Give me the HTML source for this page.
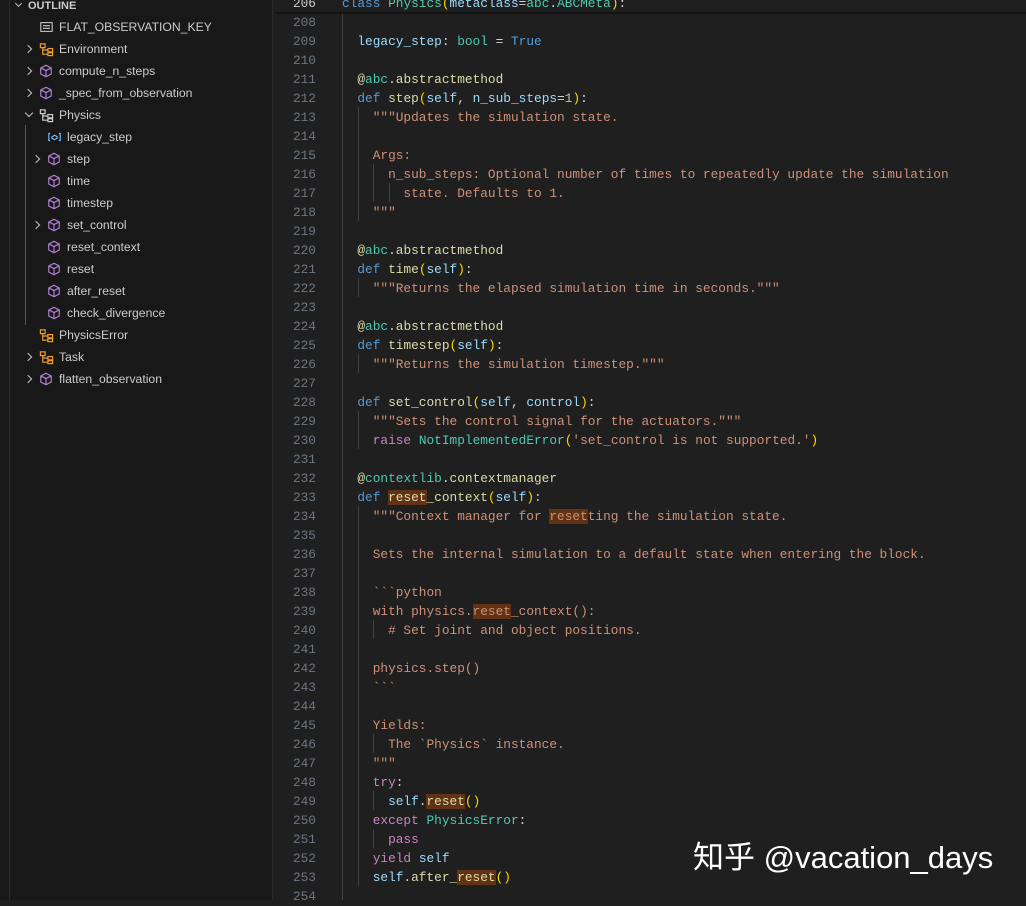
<!DOCTYPE html>
<html><head><meta charset="utf-8"><style>
*{margin:0;padding:0;box-sizing:border-box}
body{width:1026px;height:900px;overflow:hidden;background:#1f1f1f;font-family:"Liberation Sans",sans-serif;position:relative}
#side{position:absolute;left:0;top:0;width:273px;height:900px;background:#181818;border-right:1px solid #2b2b2b}
.edge{position:absolute;left:9px;top:0;width:1px;height:900px;background:#2b2b2b}
.row{position:absolute;left:0;width:270px;height:22px;line-height:22px;font-size:12.2px;color:#cccccc;white-space:nowrap}
.row .t{position:absolute}
.chev{position:absolute;width:6px;height:6px;border-right:1.3px solid #c5c5c5;border-bottom:1.3px solid #c5c5c5}
.cr{transform:rotate(-45deg);top:8px}
.cd{transform:rotate(45deg);top:6px}
.ic{position:absolute;top:4px;line-height:0}
.mono{font-family:"Liberation Mono",monospace;font-size:12.8px;line-height:19px;white-space:pre}
.ln{position:absolute;left:274px;width:42px;text-align:right;color:#6e7681}
.cl{position:absolute;left:342px;color:#d4d4d4}
.g{position:absolute;width:1px;background:#404040}
.k{color:#569cd6}.f{color:#dcdcaa}.v{color:#9cdcfe}.s{color:#ce9178}.c{color:#4ec9b0}.n{color:#b5cea8}.p{color:#c586c0}.y{color:#ffd700}
.h{background:#613214}
</style></head><body>
<div id="side"><div class="edge"></div>
<div class="row" style="left:14px;top:-5px;font-weight:bold;font-size:11px"><span class="chev cd" style="left:2px;top:6px;width:5px;height:5px"></span><span class="t" style="left:14px">OUTLINE</span></div>
<div style="position:absolute;left:25px;top:125px;width:1px;height:200px;background:#585858"></div>

<div class="row" style="top:16px"><span class="ic" style="left:39px"><svg width="15" height="14" viewBox="0 0 16 16" fill="none" stroke="#cccccc" stroke-width="1.2"><rect x="1.5" y="3" width="13" height="10"/><path d="M4 6.5h8M4 9.5h8"/></svg></span><span class="t" style="left:59px">FLAT_OBSERVATION_KEY</span></div>
<div class="row" style="top:38px"><span class="chev cr" style="left:25px"></span><span class="ic" style="left:39px"><svg width="15" height="15" viewBox="0 0 16 16" fill="none" stroke="#ee9d28" stroke-width="1.3"><rect x="1.5" y="2" width="5" height="4"/><rect x="9.5" y="7" width="5" height="3.5"/><rect x="9.5" y="11.5" width="5" height="3"/><path d="M4 6v7h5.5M4 8.5h5.5"/></svg></span><span class="t" style="left:59px">Environment</span></div>
<div class="row" style="top:60px"><span class="chev cr" style="left:25px"></span><span class="ic" style="left:39px"><svg width="14" height="14" viewBox="0 0 16 16" fill="none" stroke="#b180d7" stroke-width="1.3"><path d="M8 1.5 14 4.5v7L8 14.5 2 11.5v-7z"/><path d="M2 4.5 8 7.5 14 4.5M8 7.5v7"/></svg></span><span class="t" style="left:59px">compute_n_steps</span></div>
<div class="row" style="top:82px"><span class="chev cr" style="left:25px"></span><span class="ic" style="left:39px"><svg width="14" height="14" viewBox="0 0 16 16" fill="none" stroke="#b180d7" stroke-width="1.3"><path d="M8 1.5 14 4.5v7L8 14.5 2 11.5v-7z"/><path d="M2 4.5 8 7.5 14 4.5M8 7.5v7"/></svg></span><span class="t" style="left:59px">_spec_from_observation</span></div>
<div class="row" style="top:104px"><span class="chev cd" style="left:26px"></span><span class="ic" style="left:39px"><svg width="15" height="15" viewBox="0 0 16 16" fill="none" stroke="#cccccc" stroke-width="1.3"><rect x="1.5" y="2" width="5" height="4"/><rect x="9.5" y="7" width="5" height="3.5"/><rect x="9.5" y="11.5" width="5" height="3"/><path d="M4 6v7h5.5M4 8.5h5.5"/></svg></span><span class="t" style="left:59px">Physics</span></div>
<div class="row" style="top:126px"><span class="ic" style="left:47px"><svg width="15" height="14" viewBox="0 0 16 16" fill="none" stroke="#75beff" stroke-width="1.3"><path d="M3 4H1.5v8H3M13 4h1.5v8H13"/><path d="M5 8l3-2 3 1.5v2l-3 1.5-3-1.5z"/></svg></span><span class="t" style="left:67px">legacy_step</span></div>
<div class="row" style="top:148px"><span class="chev cr" style="left:33px"></span><span class="ic" style="left:47px"><svg width="14" height="14" viewBox="0 0 16 16" fill="none" stroke="#b180d7" stroke-width="1.3"><path d="M8 1.5 14 4.5v7L8 14.5 2 11.5v-7z"/><path d="M2 4.5 8 7.5 14 4.5M8 7.5v7"/></svg></span><span class="t" style="left:67px">step</span></div>
<div class="row" style="top:170px"><span class="ic" style="left:47px"><svg width="14" height="14" viewBox="0 0 16 16" fill="none" stroke="#b180d7" stroke-width="1.3"><path d="M8 1.5 14 4.5v7L8 14.5 2 11.5v-7z"/><path d="M2 4.5 8 7.5 14 4.5M8 7.5v7"/></svg></span><span class="t" style="left:67px">time</span></div>
<div class="row" style="top:192px"><span class="ic" style="left:47px"><svg width="14" height="14" viewBox="0 0 16 16" fill="none" stroke="#b180d7" stroke-width="1.3"><path d="M8 1.5 14 4.5v7L8 14.5 2 11.5v-7z"/><path d="M2 4.5 8 7.5 14 4.5M8 7.5v7"/></svg></span><span class="t" style="left:67px">timestep</span></div>
<div class="row" style="top:214px"><span class="chev cr" style="left:33px"></span><span class="ic" style="left:47px"><svg width="14" height="14" viewBox="0 0 16 16" fill="none" stroke="#b180d7" stroke-width="1.3"><path d="M8 1.5 14 4.5v7L8 14.5 2 11.5v-7z"/><path d="M2 4.5 8 7.5 14 4.5M8 7.5v7"/></svg></span><span class="t" style="left:67px">set_control</span></div>
<div class="row" style="top:236px"><span class="ic" style="left:47px"><svg width="14" height="14" viewBox="0 0 16 16" fill="none" stroke="#b180d7" stroke-width="1.3"><path d="M8 1.5 14 4.5v7L8 14.5 2 11.5v-7z"/><path d="M2 4.5 8 7.5 14 4.5M8 7.5v7"/></svg></span><span class="t" style="left:67px">reset_context</span></div>
<div class="row" style="top:258px"><span class="ic" style="left:47px"><svg width="14" height="14" viewBox="0 0 16 16" fill="none" stroke="#b180d7" stroke-width="1.3"><path d="M8 1.5 14 4.5v7L8 14.5 2 11.5v-7z"/><path d="M2 4.5 8 7.5 14 4.5M8 7.5v7"/></svg></span><span class="t" style="left:67px">reset</span></div>
<div class="row" style="top:280px"><span class="ic" style="left:47px"><svg width="14" height="14" viewBox="0 0 16 16" fill="none" stroke="#b180d7" stroke-width="1.3"><path d="M8 1.5 14 4.5v7L8 14.5 2 11.5v-7z"/><path d="M2 4.5 8 7.5 14 4.5M8 7.5v7"/></svg></span><span class="t" style="left:67px">after_reset</span></div>
<div class="row" style="top:302px"><span class="ic" style="left:47px"><svg width="14" height="14" viewBox="0 0 16 16" fill="none" stroke="#b180d7" stroke-width="1.3"><path d="M8 1.5 14 4.5v7L8 14.5 2 11.5v-7z"/><path d="M2 4.5 8 7.5 14 4.5M8 7.5v7"/></svg></span><span class="t" style="left:67px">check_divergence</span></div>
<div class="row" style="top:324px"><span class="ic" style="left:39px"><svg width="15" height="15" viewBox="0 0 16 16" fill="none" stroke="#ee9d28" stroke-width="1.3"><rect x="1.5" y="2" width="5" height="4"/><rect x="9.5" y="7" width="5" height="3.5"/><rect x="9.5" y="11.5" width="5" height="3"/><path d="M4 6v7h5.5M4 8.5h5.5"/></svg></span><span class="t" style="left:59px">PhysicsError</span></div>
<div class="row" style="top:346px"><span class="chev cr" style="left:25px"></span><span class="ic" style="left:39px"><svg width="15" height="15" viewBox="0 0 16 16" fill="none" stroke="#ee9d28" stroke-width="1.3"><rect x="1.5" y="2" width="5" height="4"/><rect x="9.5" y="7" width="5" height="3.5"/><rect x="9.5" y="11.5" width="5" height="3"/><path d="M4 6v7h5.5M4 8.5h5.5"/></svg></span><span class="t" style="left:59px">Task</span></div>
<div class="row" style="top:368px"><span class="chev cr" style="left:25px"></span><span class="ic" style="left:39px"><svg width="14" height="14" viewBox="0 0 16 16" fill="none" stroke="#b180d7" stroke-width="1.3"><path d="M8 1.5 14 4.5v7L8 14.5 2 11.5v-7z"/><path d="M2 4.5 8 7.5 14 4.5M8 7.5v7"/></svg></span><span class="t" style="left:59px">flatten_observation</span></div>
</div>

<div class="g" style="left:342px;top:12px;height:888px"></div>
<div class="g" style="left:358px;top:107px;height:114px"></div>
<div class="g" style="left:358px;top:278px;height:19px"></div>
<div class="g" style="left:358px;top:354px;height:19px"></div>
<div class="g" style="left:358px;top:411px;height:38px"></div>
<div class="g" style="left:358px;top:506px;height:380px"></div>
<div class="g" style="left:373px;top:164px;height:38px"></div>
<div class="g" style="left:373px;top:620px;height:19px"></div>
<div class="g" style="left:373px;top:734px;height:19px"></div>
<div class="g" style="left:373px;top:791px;height:19px"></div>
<div class="g" style="left:373px;top:829px;height:19px"></div>
<div class="g" style="left:389px;top:183px;height:19px"></div>

<div class="mono ln" style="top:-6px;color:#cccccc">206</div>
<div class="mono cl" style="top:-6px"><span class="k">class</span> <span class="c">Physics</span><span class="y">(</span><span class="v">metaclass</span>=<span class="c">abc</span>.<span class="c">ABCMeta</span><span class="y">)</span>:</div>
<div style="position:absolute;left:274px;top:12px;width:752px;height:2px;background:#141414"></div>

<div class="mono ln" style="top:13px">208
209
210
211
212
213
214
215
216
217
218
219
220
221
222
223
224
225
226
227
228
229
230
231
232
233
234
235
236
237
238
239
240
241
242
243
244
245
246
247
248
249
250
251
252
253
254</div>
<div class="mono cl" style="top:13px">
  <span class="v">legacy_step</span>: <span class="c">bool</span> = <span class="k">True</span>

  <span class="f">@</span><span class="c">abc</span>.<span class="f">abstractmethod</span>
  <span class="k">def</span> <span class="f">step</span><span class="y">(</span><span class="v">self</span>, <span class="v">n_sub_steps</span>=<span class="n">1</span><span class="y">)</span>:
<span class="s">    """Updates the simulation state.

    Args:
      n_sub_steps: Optional number of times to repeatedly update the simulation
        state. Defaults to 1.
    """</span>

  <span class="f">@</span><span class="c">abc</span>.<span class="f">abstractmethod</span>
  <span class="k">def</span> <span class="f">time</span><span class="y">(</span><span class="v">self</span><span class="y">)</span>:
<span class="s">    """Returns the elapsed simulation time in seconds."""</span>

  <span class="f">@</span><span class="c">abc</span>.<span class="f">abstractmethod</span>
  <span class="k">def</span> <span class="f">timestep</span><span class="y">(</span><span class="v">self</span><span class="y">)</span>:
<span class="s">    """Returns the simulation timestep."""</span>

  <span class="k">def</span> <span class="f">set_control</span><span class="y">(</span><span class="v">self</span>, <span class="v">control</span><span class="y">)</span>:
<span class="s">    """Sets the control signal for the actuators."""</span>
    <span class="p">raise</span> <span class="c">NotImplementedError</span><span class="y">(</span><span class="s">'set_control is not supported.'</span><span class="y">)</span>

  <span class="f">@</span><span class="c">contextlib</span>.<span class="f">contextmanager</span>
  <span class="k">def</span> <span class="f"><span class="h">reset</span>_context</span><span class="y">(</span><span class="v">self</span><span class="y">)</span>:
<span class="s">    """Context manager for <span class="h">reset</span>ting the simulation state.

    Sets the internal simulation to a default state when entering the block.

    &#96;&#96;&#96;python
    with physics.<span class="h">reset</span>_context():
      # Set joint and object positions.

    physics.step()
    &#96;&#96;&#96;

    Yields:
      The &#96;Physics&#96; instance.
    """</span>
    <span class="p">try</span>:
      <span class="v">self</span>.<span class="f"><span class="h">reset</span></span><span class="y">()</span>
    <span class="p">except</span> <span class="c">PhysicsError</span>:
      <span class="p">pass</span>
    <span class="p">yield</span> <span class="v">self</span>
    <span class="v">self</span>.<span class="f">after_<span class="h">reset</span></span><span class="y">()</span>
</div>

<div style="position:absolute;left:693px;top:832px;font-size:31px;color:#fff;font-family:'Liberation Sans','Noto Sans CJK SC',sans-serif;white-space:nowrap">知乎 @vacation_days</div>
</body></html>
